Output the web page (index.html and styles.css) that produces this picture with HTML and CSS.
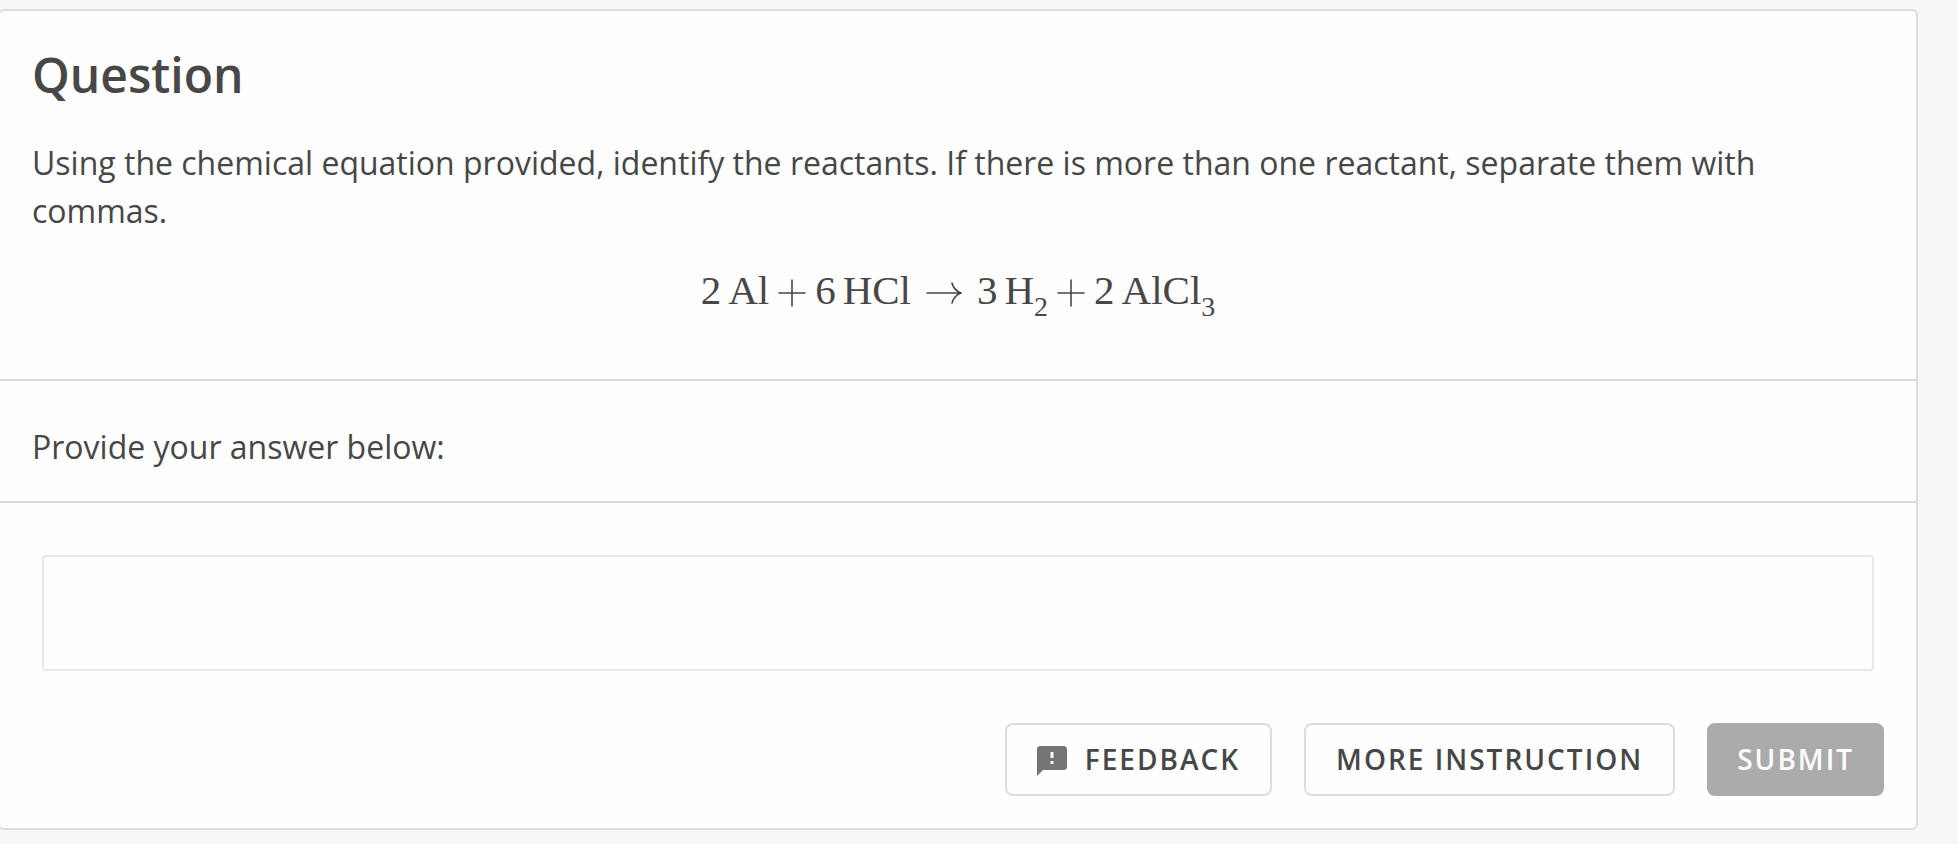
FILE: index.html
```html
<!DOCTYPE html>
<html lang="en">
<head>
  <meta charset="UTF-8">
  <meta name="viewport" content="width=device-width, initial-scale=1.0">
  <title>Question</title>
  <link rel="stylesheet" href="styles.css">
</head>
<body>
  <main class="card">
    <section class="question">
      <h1>Question</h1>
      <p>Using the chemical equation provided, identify the reactants. If there is more than one reactant, separate them with commas.</p>
      <div class="equation">
        <span class="term"><span>2</span><span>Al</span></span>
        <svg class="plus" viewBox="0 0 28 28" role="img" aria-label="plus">
          <path d="M14 1V27M1 14H27" fill="none" stroke="currentColor" stroke-width="1.600" stroke-linecap="round"/>
        </svg>
        <span class="term"><span>6</span><span>HCl</span></span>
        <svg class="arrow" viewBox="0 0 36 24" role="img" aria-label="yields">
          <path d="M1 12H34M26 2C27 6 30 10 35 12C30 14 27 18 26 22" fill="none" stroke="currentColor" stroke-width="1.600" stroke-linecap="round"/>
        </svg>
        <span class="term"><span>3</span><span>H<sub>2</sub></span></span>
        <svg class="plus" viewBox="0 0 28 28" role="img" aria-label="plus">
          <path d="M14 1V27M1 14H27" fill="none" stroke="currentColor" stroke-width="1.600" stroke-linecap="round"/>
        </svg>
        <span class="term"><span>2</span><span>AlCl<sub>3</sub></span></span>
      </div>
    </section>
    <section class="prompt">
      <label for="answer">Provide your answer below:</label>
    </section>
    <form class="answer-form">
      <div class="answer-box">
        <input type="text" id="answer" autocomplete="off">
      </div>
      <div class="actions">
        <button type="button" class="btn">
          <svg class="icon" viewBox="2 2 20 20" aria-hidden="true">
            <path fill="currentColor" d="M20 2H4c-1.100 0-2 .9-2 2v18l4-4h14c1.100 0 2-.9 2-2V4c0-1.100-.9-2-2-2zm-7 12h-2v-2h2v2zm0-4h-2V6h2v4z"/>
          </svg>
          FEEDBACK
        </button>
        <button type="button" class="btn">MORE INSTRUCTION</button>
        <button type="submit" class="btn btn-submit" disabled>SUBMIT</button>
      </div>
    </form>
  </main>
</body>
</html>
```

FILE: styles.css
```css
* {
  margin: 0;
  padding: 0;
  box-sizing: border-box;
}
body {
  font-family: "Open Sans", sans-serif;
  font-size: 32px;
  line-height: 48px;
  background: #f7f7f7;
  color: #474747;
}
.card {
  margin: 9px 40px 14px -2px;
  background: #fefefe;
  border: 2px solid #dcdcdc;
  border-radius: 6px;
}
.question {
  padding: 32px 32px 59px;
}
h1 {
  font-size: 48px;
  font-weight: 600;
  line-height: 64px;
  margin-bottom: 32px;
}
.equation {
  display: flex;
  justify-content: center;
  align-items: center;
  gap: 9px;
  margin-top: 31px;
  font-family: "Liberation Serif", serif;
  font-size: 41px;
}
.term {
  display: flex;
  gap: 7px;
  padding-bottom: 6px;
}
.plus {
  width: 28px;
  height: 28px;
}
.equation sub {
  font-size: 28px;
  line-height: 1px;
  vertical-align: -12px;
}
.arrow {
  width: 36px;
  height: 24px;
  margin: 0 6px;
}
.prompt {
  padding: 42px 32px 30px;
  border-top: 2px solid #dcdcdc;
  border-bottom: 2px solid #dcdcdc;
}
.prompt label {
  display: block;
}
.answer-form {
  padding: 52px 32px 32px;
}
.answer-box {
  padding: 0 10px;
}
.answer-box input {
  display: block;
  width: 100%;
  height: 116px;
  padding: 0 24px;
  font: inherit;
  color: inherit;
  background: #fefefe;
  border: 2px solid #e8e8e8;
  border-radius: 4px;
}
.actions {
  display: flex;
  justify-content: flex-end;
  gap: 32px;
  margin-top: 52px;
}
.btn {
  display: flex;
  align-items: center;
  gap: 18px;
  padding: 12px 30px 13px;
  font-family: inherit;
  font-size: 28px;
  font-weight: 600;
  line-height: 44px;
  letter-spacing: 2px;
  color: #474747;
  background: #fefefe;
  border: 2px solid #dcdcdc;
  border-radius: 8px;
  cursor: pointer;
}
.btn-submit {
  padding: 12px 28px 13px;
  color: #fefefe;
  background: #ababab;
  border-color: #ababab;
  cursor: default;
}
.icon {
  width: 30px;
  height: 30px;
  margin-top: 4px;
  color: #757575;
}
```
